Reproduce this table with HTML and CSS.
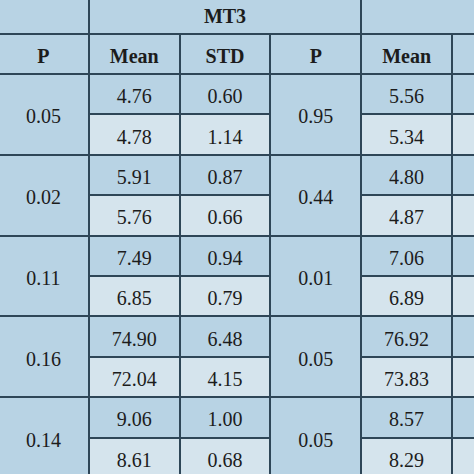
FILE: index.html
```html
<!DOCTYPE html>
<html>
<head>
<meta charset="utf-8">
<link rel="stylesheet" href="styles.css">
</head>
<body>
<div class="frame">
<table class="data">
  <colgroup>
    <col class="c"><col class="c"><col class="c"><col class="c"><col class="c"><col class="c">
  </colgroup>
  <thead>
    <tr class="top">
      <th class="mid"></th>
      <th class="mid" colspan="3">MT3</th>
      <th class="mid" colspan="2"></th>
    </tr>
    <tr class="head">
      <th class="mid">P</th>
      <th class="mid">Mean</th>
      <th class="mid">STD</th>
      <th class="mid">P</th>
      <th class="mid">Mean</th>
      <th class="mid"></th>
    </tr>
  </thead>
  <tbody>
    <tr class="r">
      <td class="mid" rowspan="2">0.05</td><td class="mid">4.76</td><td class="mid">0.60</td>
      <td class="mid" rowspan="2">0.95</td><td class="mid">5.56</td><td class="mid"></td>
    </tr>
    <tr class="r">
      <td class="light">4.78</td><td class="light">1.14</td><td class="light">5.34</td><td class="light"></td>
    </tr>
    <tr class="r">
      <td class="mid" rowspan="2">0.02</td><td class="mid">5.91</td><td class="mid">0.87</td>
      <td class="mid" rowspan="2">0.44</td><td class="mid">4.80</td><td class="mid"></td>
    </tr>
    <tr class="r">
      <td class="light">5.76</td><td class="light">0.66</td><td class="light">4.87</td><td class="light"></td>
    </tr>
    <tr class="r">
      <td class="mid" rowspan="2">0.11</td><td class="mid">7.49</td><td class="mid">0.94</td>
      <td class="mid" rowspan="2">0.01</td><td class="mid">7.06</td><td class="mid"></td>
    </tr>
    <tr class="r">
      <td class="light">6.85</td><td class="light">0.79</td><td class="light">6.89</td><td class="light"></td>
    </tr>
    <tr class="r">
      <td class="mid" rowspan="2">0.16</td><td class="mid">74.90</td><td class="mid">6.48</td>
      <td class="mid" rowspan="2">0.05</td><td class="mid">76.92</td><td class="mid"></td>
    </tr>
    <tr class="r">
      <td class="light">72.04</td><td class="light">4.15</td><td class="light">73.83</td><td class="light"></td>
    </tr>
    <tr class="r">
      <td class="mid" rowspan="2">0.14</td><td class="mid">9.06</td><td class="mid">1.00</td>
      <td class="mid" rowspan="2">0.05</td><td class="mid">8.57</td><td class="mid"></td>
    </tr>
    <tr class="r">
      <td class="light">8.61</td><td class="light">0.68</td><td class="light">8.29</td><td class="light"></td>
    </tr>
  </tbody>
</table>
</div>
</body>
</html>
```
FILE: styles.css
```css
html, body {
  margin: 0;
  padding: 0;
  background: #ffffff;
}
.frame {
  width: 474px;
  height: 474px;
  overflow: hidden;
}
.data {
  border-collapse: collapse;
  table-layout: fixed;
  width: 545px;
  margin-left: -3px;
  margin-top: -8px;
  font-family: "Liberation Serif", "Times New Roman", serif;
  font-size: 20px;
  color: #1c1c1c;
}
.c {
  width: 90.8px;
}
.data th,
.data td {
  border: 2px solid #2e4657;
  padding: 4px 0 0 0;
  text-align: center;
  vertical-align: middle;
  line-height: 22px;
}
.data th {
  font-weight: bold;
}
.data td {
  font-weight: normal;
}
.top {
  height: 41px;
}
.head {
  height: 40px;
}
.r {
  height: 40.4px;
}
.mid {
  background: #b8d3e4;
}
.light {
  background: #d5e4ed;
}
```
